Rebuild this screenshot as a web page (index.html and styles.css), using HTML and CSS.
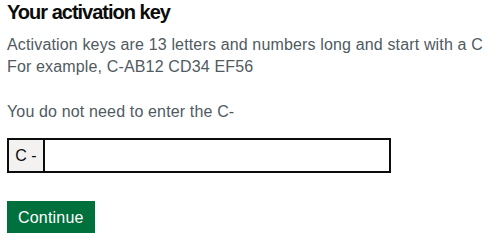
FILE: index.html
```html
<!DOCTYPE html>
<html lang="en">
<head>
  <meta charset="UTF-8">
  <title>Your activation key</title>
  <link rel="stylesheet" href="styles.css">
</head>
<body>
  <form class="form">
    <h1 class="heading">Your activation key</h1>
    <div class="hint">
      Activation keys are 13 letters and numbers long and start with a C<br>
      For example, C-AB12 CD34 EF56
    </div>
    <p class="hint note">You do not need to enter the C-</p>

    <div class="input-wrapper">
      <span class="prefix">C -</span>
      <input class="input" type="text" name="activationKey">
    </div>

    <button class="button" type="submit">Continue</button>
  </form>
</body>
</html>
```

FILE: styles.css
```css
body {
  margin: 0;
  padding: 0 7px;
  font-family: "Liberation Sans", Arial, sans-serif;
  color: #0b0c0c;
  background: #fff;
}

.form {
  display: flex;
  flex-direction: column;
  align-items: flex-start;
}

.heading {
  margin: 0;
  padding-top: 1px;
  font-size: 20px;
  line-height: 22px;
  font-weight: 700;
  letter-spacing: -1px;
}

.hint {
  margin-top: 11px;
  font-size: 16px;
  line-height: 22px;
  letter-spacing: 0.15px;
  color: #505a5f;
}

.note {
  margin: 23px 0 0;
}

.input-wrapper {
  display: flex;
  margin-top: 15px;
  width: 384px;
  height: 35px;
  box-sizing: border-box;
  border: 2px solid #0b0c0c;
}

.prefix {
  display: flex;
  align-items: center;
  justify-content: center;
  width: 34px;
  background: #f3f2f1;
  border-right: 2px solid #0b0c0c;
  font-size: 16px;
}

.input {
  flex: 1;
  border: 0;
  padding: 0 5px;
  font: inherit;
  outline: none;
}

.button {
  margin-top: 28px;
  padding: 7px 11px 6px;
  border: 0;
  background: #00703c;
  box-shadow: 0 2px 0 #002d18;
  color: #fff;
  font-family: inherit;
  font-size: 16px;
  line-height: 19px;
  letter-spacing: 0.2px;
  cursor: pointer;
}
```
